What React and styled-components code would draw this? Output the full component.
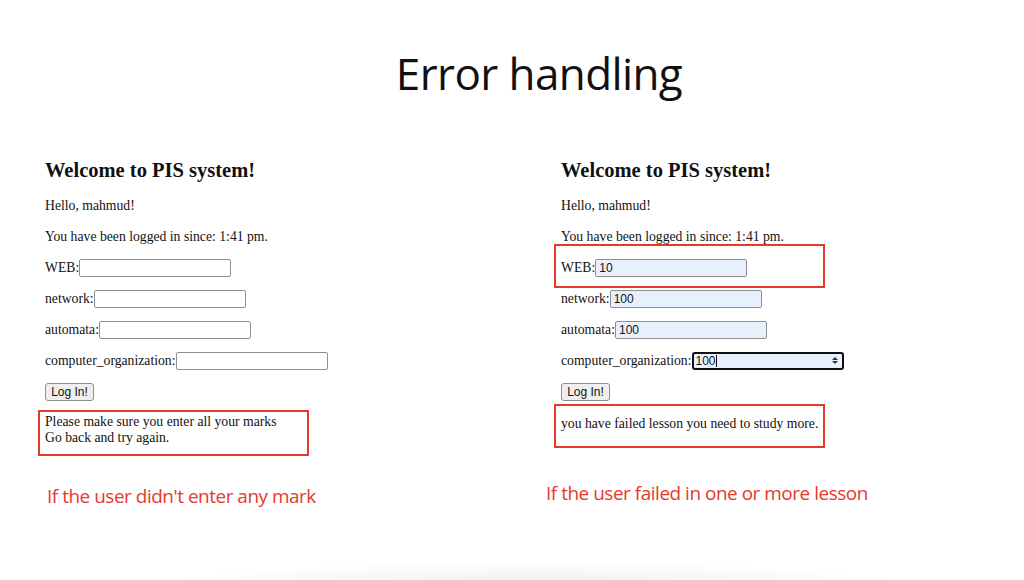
import styled, { createGlobalStyle } from "styled-components"

const Global = createGlobalStyle`
    html, body { margin: 0; padding: 0; background: #fff; }
`

const Slide = styled.div`
    width: 1024px;
    height: 580px;
    overflow: hidden;
    box-sizing: border-box;
    background:
        radial-gradient(ellipse 380px 28px at 535px 588px, rgba(0, 0, 0, 0.07), rgba(0, 0, 0, 0) 100%),
        #ffffff;
    display: flex;
    flex-direction: column;
`

const Title = styled.h1`
    margin: 0;
    padding-top: 45px;
    height: 56px;
    line-height: 56px;
    text-align: center;
    padding-left: 54px;
    font-family: "Open Sans", sans-serif;
    font-weight: 400;
    font-size: 44px;
    letter-spacing: -0.6px;
    color: #111;
`

const Columns = styled.div`
    display: grid;
    grid-template-columns: 516px 463px;
    padding-left: 45px;
    margin-top: 54px;
`

const Panel = styled.div`
    display: flex;
    flex-direction: column;
    font-family: "Liberation Serif", "Times New Roman", serif;
    font-size: 13.7px;
    color: #111;
`

const Heading = styled.h3`
    margin: 0 0 5px;
    height: 30px;
    line-height: 30px;
    font-size: 20.5px;
    font-weight: 700;
`

const Line = styled.div`
    height: 31px;
    display: flex;
    align-items: center;
    position: relative;

    ${p => p.$marked && `
        &::after {
            content: "";
            position: absolute;
            left: -7px;
            top: -8px;
            width: 271px;
            height: 44px;
            border: 2px solid #e5392d;
            box-sizing: border-box;
            pointer-events: none;
        }
    `}
`

const Field = styled.div`
    width: 152px;
    height: 18px;
    box-sizing: border-box;
    border: ${p => p.$focus ? "2px solid #111" : "1px solid #8f8f8f"};
    border-radius: ${p => p.$focus ? "3px" : "2px"};
    background: ${p => p.$filled ? "#e8f0fe" : "#fff"};
    display: flex;
    align-items: center;
    padding: 0 ${p => p.$focus ? "4px" : "5px"} 0 ${p => p.$focus ? "2px" : "3px"};
    font-family: "Liberation Sans", Arial, sans-serif;
    font-size: 12px;
    color: #111;
`

const Caret = styled.span`
    width: 1px;
    height: 12px;
    background: #111;
`

const Spin = styled.span`
    margin-left: auto;
    display: flex;
    flex-direction: column;
    gap: 1px;
    align-items: center;

    i {
        width: 0;
        height: 0;
        border-left: 3px solid transparent;
        border-right: 3px solid transparent;
    }
    i:first-child { border-bottom: 3.5px solid #333; }
    i:last-child { border-top: 3.5px solid #333; }
`

const Button = styled.div`
    width: 49px;
    height: 18px;
    box-sizing: border-box;
    border: 1px solid #8f8f8f;
    border-radius: 3px;
    background: #efefef;
    display: flex;
    align-items: center;
    justify-content: center;
    font-family: "Liberation Sans", Arial, sans-serif;
    font-size: 12px;
    color: #111;
`

const ErrorBox = styled.div`
    width: 271px;
    height: ${p => p.$h}px;
    margin: ${p => p.$top}px 0 0 -7px;
    box-sizing: border-box;
    border: 2px solid #e5392d;
    padding: ${p => p.$pad}px 0 0 5px;
    line-height: 16px;
`

const Caption = styled.div`
    margin-top: ${p => p.$top}px;
    margin-left: ${p => p.$left}px;
    font-family: "Open Sans", sans-serif;
    font-size: 18.9px;
    letter-spacing: -0.45px;
    color: #e5392d;
`

function Form({ filled, marked, errorLines, box, caption }) {
    const v = filled ? "100" : ""
    return (
        <Panel>
            <Heading>Welcome to PIS system!</Heading>
            <Line>Hello, mahmud!</Line>
            <Line>You have been logged in since: 1:41 pm.</Line>
            <Line $marked={marked}>WEB:<Field $filled={filled}>{filled ? "10" : ""}</Field></Line>
            <Line>network:<Field $filled={filled}>{v}</Field></Line>
            <Line>automata:<Field $filled={filled}>{v}</Field></Line>
            <Line>
                computer_organization:
                <Field $filled={filled} $focus={filled}>
                    {v}{filled && <Caret />}
                    {filled && <Spin><i /><i /></Spin>}
                </Field>
            </Line>
            <Line><Button>Log In!</Button></Line>
            <ErrorBox $h={box.h} $top={box.top} $pad={box.pad}>
                {errorLines.map(t => <div key={t}>{t}</div>)}
            </ErrorBox>
            <Caption $top={caption.top} $left={caption.left}>{caption.text}</Caption>
        </Panel>
    )
}

export default function App() {
    return (
        <Slide>
            <Global />
            <Title>Error handling</Title>
            <Columns>
                <Form
                    errorLines={["Please make sure you enter all your marks", "Go back and try again."]}
                    box={{ h: 46, top: 3, pad: 2 }}
                    caption={{ text: "If the user didn't enter any mark", top: 27, left: 2 }}
                />
                <Form
                    filled
                    marked
                    errorLines={["you have failed lesson you need to study more."]}
                    box={{ h: 44, top: -3, pad: 10 }}
                    caption={{ text: "If the user failed in one or more lesson", top: 32, left: -15 }}
                />
            </Columns>
        </Slide>
    )
}
